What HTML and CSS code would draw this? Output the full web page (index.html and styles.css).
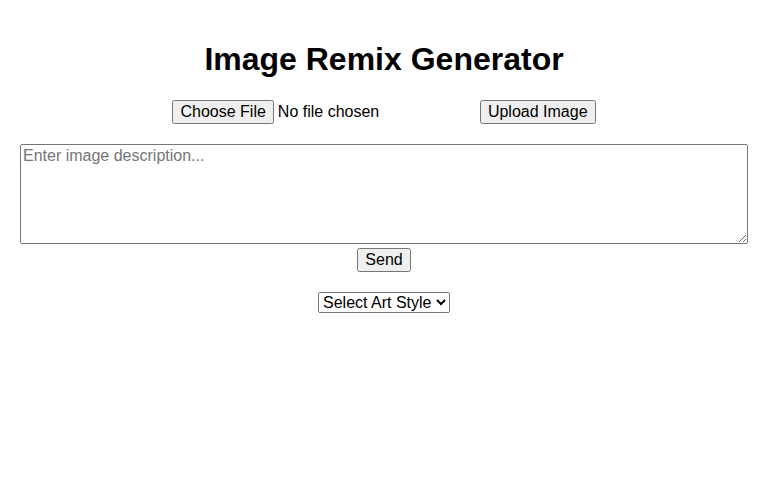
FILE: index.html
```html
<!DOCTYPE html>
<html>
<head>
<meta charset="utf-8">
<link rel="stylesheet" href="styles.css">
</head>
<body>
<div class="app">
  <h1 class="title">Image Remix Generator</h1>
  <div class="upload-row">
    <input type="file" class="file-input">
    <button class="btn">Upload Image</button>
  </div>
  <div class="prompt">
    <textarea class="prompt-text" placeholder="Enter image description..."></textarea>
    <button class="btn">Send</button>
  </div>
  <div class="style-row">
    <select class="style-select">
      <option>Select Art Style</option>
    </select>
  </div>
</div>
</body>
</html>
```

FILE: styles.css
```css
html, body {
  margin: 0;
  padding: 0;
  background: #fff;
}
.app {
  padding: 20px;
  font-family: "Liberation Sans", Arial, sans-serif;
  font-size: 16px;
  text-align: center;
  color: #000;
}
.title {
  font-size: 32px;
  font-weight: bold;
  margin: 21px 0 22px;
}
.upload-row {
  text-align: center;
  height: 24px;
}
.file-input, .btn, .prompt-text, .style-select {
  font-family: "Liberation Sans", Arial, sans-serif;
  font-size: 16px;
}
.prompt {
  margin-top: 20px;
  display: flex;
  flex-direction: column;
  align-items: center;
  gap: 4px;
}
.prompt-text {
  width: 100%;
  height: 100px;
  box-sizing: border-box;
  margin: 0;
}
.style-row {
  margin-top: 20px;
}
```
